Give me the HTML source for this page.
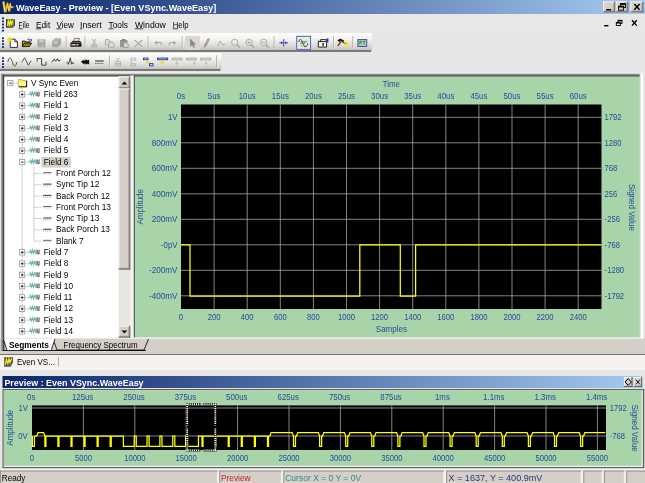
<!DOCTYPE html>
<html><head><meta charset="utf-8"><title>WaveEasy - Preview - [Even VSync.WaveEasy]</title>
<style>html,body{margin:0;padding:0;background:#d4d0c8;overflow:hidden}body{width:645px;height:483px;font-family:"Liberation Sans",sans-serif}svg text{white-space:pre}</style>
</head><body>
<svg width="645" height="483" viewBox="0 0 645 483" font-family="'Liberation Sans', sans-serif" style="display:block;filter:blur(0.3px)">
<defs>
<linearGradient id="gTitle" x1="0" x2="1" y1="0" y2="0"><stop offset="0" stop-color="#0a246a"/><stop offset="1" stop-color="#a6caf0"/></linearGradient>
<linearGradient id="gTb" x1="0" x2="0" y1="0" y2="1"><stop offset="0" stop-color="#fdfdfc"/><stop offset="0.35" stop-color="#f4f3f1"/><stop offset="0.75" stop-color="#dbd9d4"/><stop offset="1" stop-color="#c2c0ba"/></linearGradient>
<pattern id="chk" width="2" height="2" patternUnits="userSpaceOnUse"><rect width="2" height="2" fill="#e9e7e3"/></pattern>
</defs>
<rect x="0.00" y="0.00" width="645.00" height="483.00" fill="#e6e6e6"/>
<rect x="0.00" y="0.00" width="645.00" height="14.00" fill="url(#gTitle)"/>
<text transform="translate(16.00,10.80) scale(1.0334,1)" font-size="8.8" fill="#fff" text-anchor="start" font-weight="bold">WaveEasy - Preview - [Even VSync.WaveEasy]</text>
<path d="M2.2 1.4 L4.6 1.2 L5.6 7.6 L6.8 2.6 L8.2 2.6 L9 7 L9.8 2.8 L11 3 L11 5.6 L13.6 6.4 L13.4 8.2 L11 8 L10.2 11.6 L8.4 11.8 L7.6 7.6 L6.4 12.4 L4 12.4 Z" fill="#e6ae14"/>
<path d="M3.4 2 L5 11.4 M7.4 3.4 L8.8 10.8 M10.4 3.6 L10 8" stroke="#ffe27a" stroke-width="0.9" fill="none"/>
<rect x="603.20" y="1.50" width="12.00" height="10.80" fill="#d4d0c8"/>
<line x1="603.20" y1="1.90" x2="615.20" y2="1.90" stroke="#fff" stroke-width="0.8"/>
<line x1="603.60" y1="1.50" x2="603.60" y2="12.30" stroke="#fff" stroke-width="0.8"/>
<line x1="603.20" y1="11.90" x2="615.20" y2="11.90" stroke="#404040" stroke-width="0.8"/>
<line x1="614.80" y1="1.50" x2="614.80" y2="12.30" stroke="#404040" stroke-width="0.8"/>
<line x1="604.00" y1="11.10" x2="614.40" y2="11.10" stroke="#808080" stroke-width="0.8"/>
<line x1="614.00" y1="2.30" x2="614.00" y2="11.50" stroke="#808080" stroke-width="0.8"/>
<rect x="615.80" y="1.50" width="12.40" height="10.80" fill="#d4d0c8"/>
<line x1="615.80" y1="1.90" x2="628.20" y2="1.90" stroke="#fff" stroke-width="0.8"/>
<line x1="616.20" y1="1.50" x2="616.20" y2="12.30" stroke="#fff" stroke-width="0.8"/>
<line x1="615.80" y1="11.90" x2="628.20" y2="11.90" stroke="#404040" stroke-width="0.8"/>
<line x1="627.80" y1="1.50" x2="627.80" y2="12.30" stroke="#404040" stroke-width="0.8"/>
<line x1="616.60" y1="11.10" x2="627.40" y2="11.10" stroke="#808080" stroke-width="0.8"/>
<line x1="627.00" y1="2.30" x2="627.00" y2="11.50" stroke="#808080" stroke-width="0.8"/>
<rect x="630.50" y="1.50" width="12.80" height="10.80" fill="#d4d0c8"/>
<line x1="630.50" y1="1.90" x2="643.30" y2="1.90" stroke="#fff" stroke-width="0.8"/>
<line x1="630.90" y1="1.50" x2="630.90" y2="12.30" stroke="#fff" stroke-width="0.8"/>
<line x1="630.50" y1="11.90" x2="643.30" y2="11.90" stroke="#404040" stroke-width="0.8"/>
<line x1="642.90" y1="1.50" x2="642.90" y2="12.30" stroke="#404040" stroke-width="0.8"/>
<line x1="631.30" y1="11.10" x2="642.50" y2="11.10" stroke="#808080" stroke-width="0.8"/>
<line x1="642.10" y1="2.30" x2="642.10" y2="11.50" stroke="#808080" stroke-width="0.8"/>
<rect x="606.30" y="9.00" width="4.80" height="1.50" fill="#000"/>
<g fill="none" stroke="#000" stroke-width="0.9"><rect x="620.5" y="3.6" width="5" height="4"/><line x1="620.5" y1="4.2" x2="625.5" y2="4.2" stroke-width="1.4"/><rect x="618.6" y="6.2" width="5" height="4" fill="#d4d0c8"/><line x1="618.6" y1="6.8" x2="623.6" y2="6.8" stroke-width="1.4"/></g>
<path d="M634.3 4 L639.6 9.8 M639.6 4 L634.3 9.8" stroke="#000" stroke-width="1.5" fill="none"/>
<rect x="0.00" y="14.00" width="645.00" height="19.50" fill="#e7e7e6"/>
<rect x="2.10" y="17.40" width="1.80" height="1.80" fill="#001c7c"/>
<rect x="2.10" y="20.48" width="1.80" height="1.80" fill="#001c7c"/>
<rect x="2.10" y="23.56" width="1.80" height="1.80" fill="#001c7c"/>
<rect x="2.10" y="26.64" width="1.80" height="1.80" fill="#001c7c"/>
<rect x="2.10" y="29.72" width="1.80" height="1.80" fill="#001c7c"/>
<path d="M6 19.2 H14.9 V25.4 L12.6 27.8 H6 Z" fill="#3c3c34"/>
<path d="M7 20.2 H13.9 V25 L12.2 26.8 H7 Z" fill="#7c7c6c"/>
<path d="M7.6 25.6 L8.4 21.2 L9.6 24.6 L10.6 21 L11.6 24 L12.8 20.6" stroke="#f4f000" stroke-width="1.3" fill="none"/>
<text transform="translate(18.60,27.70) scale(0.7776,1)" font-size="8.7" fill="#000" text-anchor="start">File</text>
<line x1="18.60" y1="28.80" x2="22.73" y2="28.80" stroke="#000" stroke-width="0.7"/>
<text transform="translate(36.00,27.70) scale(0.9472,1)" font-size="8.7" fill="#000" text-anchor="start">Edit</text>
<line x1="36.00" y1="28.80" x2="41.50" y2="28.80" stroke="#000" stroke-width="0.7"/>
<text transform="translate(56.40,27.70) scale(0.9305,1)" font-size="8.7" fill="#000" text-anchor="start">View</text>
<line x1="56.40" y1="28.80" x2="61.80" y2="28.80" stroke="#000" stroke-width="0.7"/>
<text transform="translate(80.00,27.70) scale(0.9974,1)" font-size="8.7" fill="#000" text-anchor="start">Insert</text>
<line x1="80.00" y1="28.80" x2="82.41" y2="28.80" stroke="#000" stroke-width="0.7"/>
<text transform="translate(108.50,27.70) scale(0.9602,1)" font-size="8.7" fill="#000" text-anchor="start">Tools</text>
<line x1="108.50" y1="28.80" x2="113.60" y2="28.80" stroke="#000" stroke-width="0.7"/>
<text transform="translate(134.90,27.70) scale(1.0019,1)" font-size="8.7" fill="#000" text-anchor="start">Window</text>
<line x1="134.90" y1="28.80" x2="143.13" y2="28.80" stroke="#000" stroke-width="0.7"/>
<text transform="translate(172.70,27.70) scale(0.8831,1)" font-size="8.7" fill="#000" text-anchor="start">Help</text>
<line x1="172.70" y1="28.80" x2="178.25" y2="28.80" stroke="#000" stroke-width="0.7"/>
<rect x="604.20" y="25.00" width="4.20" height="1.40" fill="#000"/>
<g fill="none" stroke="#000" stroke-width="0.9"><rect x="618" y="20.3" width="4" height="3.2"/><line x1="618" y1="20.7" x2="622" y2="20.7" stroke-width="1.3"/><rect x="616.3" y="22.4" width="4" height="3.2" fill="#e7e7e6"/><line x1="616.3" y1="22.9" x2="620.3" y2="22.9" stroke-width="1.3"/></g>
<path d="M632 20.3 L636.8 25.6 M636.8 20.3 L632 25.6" stroke="#000" stroke-width="1.4" fill="none"/>
<path d="M0 33 H370.4 Q372.4 33 372.4 35 V48.4 Q372.4 50.4 370.4 50.4 H0 Z" fill="url(#gTb)"/>
<line x1="0.00" y1="50.95" x2="371.20" y2="50.95" stroke="#595753" stroke-width="1.5"/>
<rect x="2.10" y="37.30" width="1.80" height="1.80" fill="#001c7c"/>
<rect x="2.10" y="40.25" width="1.80" height="1.80" fill="#001c7c"/>
<rect x="2.10" y="43.20" width="1.80" height="1.80" fill="#001c7c"/>
<rect x="2.10" y="46.15" width="1.80" height="1.80" fill="#001c7c"/>
<path d="M0 53 H219.6 Q221.6 53 221.6 55 V67.5 Q221.6 69.5 219.6 69.5 H0 Z" fill="url(#gTb)"/>
<line x1="0.00" y1="70.05" x2="220.40" y2="70.05" stroke="#595753" stroke-width="1.5"/>
<rect x="2.10" y="57.30" width="1.80" height="1.80" fill="#001c7c"/>
<rect x="2.10" y="60.25" width="1.80" height="1.80" fill="#001c7c"/>
<rect x="2.10" y="63.20" width="1.80" height="1.80" fill="#001c7c"/>
<rect x="2.10" y="66.15" width="1.80" height="1.80" fill="#001c7c"/>
<g id="tb1">
<path d="M10.2 39.2 h4.6 l2.6 2.6 v5.6 h-7.2 z" fill="#fff" stroke="#000" stroke-width="0.8"/>
<path d="M14.8 39.2 v2.6 h2.6" fill="none" stroke="#000" stroke-width="0.7"/>
<path d="M9.8 36.8 v6 M6.9 39.8 h5.8 M7.8 37.8 l4 4 M11.8 37.8 l-4 4" stroke="#e8e000" stroke-width="1" fill="none"/>
<path d="M22.4 46.6 v-5.6 h2.6 l0.8 0.9 h3.6 v1.4" fill="#b0a820" stroke="#000" stroke-width="0.8"/>
<path d="M22.4 46.6 l2 -3.6 h7.2 l-2.2 3.6 z" fill="#8c8400" stroke="#000" stroke-width="0.8"/>
<path d="M27.2 39.6 q2 -1.6 3.6 0.2 l0.6 -0.8 v2.2 h-2.2 l0.8 -0.8" fill="none" stroke="#2838b0" stroke-width="0.8"/>
<path d="M37.4 39.2 h8 v8.2 h-7.2 l-0.8 -0.8 z" fill="#a6a6a2"/>
<rect x="39.20" y="39.20" width="4.60" height="3.20" fill="#cbc9c4"/>
<rect x="39.60" y="44.60" width="3.80" height="2.80" fill="#bdbbb6"/>
<rect x="40.20" y="45.00" width="1.20" height="2.00" fill="#a6a6a2"/>
<path d="M54.6 38.2 h6.4 v6.6 h-1.2 v1.3 h-1.2 v1.2 h-6.4 v-6.6 h1.2 v-1.3 h1.2 z" fill="#a6a6a2"/>
<path d="M53.6 41.6 h4 v1.8 h-4 z" fill="#d4d2cc"/>
<path d="M54.8 39.4 h5 M53.6 40.6 h5" stroke="#c4c2bc" stroke-width="0.5" fill="none"/>
<line x1="66.30" y1="36.20" x2="66.30" y2="48.00" stroke="#a6a49e" stroke-width="0.9"/>
<line x1="67.10" y1="36.70" x2="67.10" y2="48.50" stroke="#f8f8f6" stroke-width="0.6"/>
<path d="M73.4 41.2 L74.6 38.4 H79.4 L78.6 41.2 Z" fill="#ececec" stroke="#303030" stroke-width="0.6"/>
<path d="M70.4 43.6 L72.4 41 H80.4 L81.5 43.6 V46.8 H70.4 Z" fill="#1c1c1c"/>
<path d="M72.8 41.7 H80 L80.6 43 H72 Z" fill="#59606a"/>
<rect x="71.40" y="44.20" width="7.20" height="1.10" fill="#f0f0f0"/>
<rect x="75.60" y="44.10" width="1.40" height="1.30" fill="#e02020"/>
<line x1="85.00" y1="36.20" x2="85.00" y2="48.00" stroke="#a6a49e" stroke-width="0.9"/>
<line x1="85.80" y1="36.70" x2="85.80" y2="48.50" stroke="#f8f8f6" stroke-width="0.6"/>
<g fill="none" stroke="#a2a29e" stroke-width="0.85"><path d="M92.4 38.8 L95.2 44.8 M96 38.8 L93.2 44.8"/><ellipse cx="92.6" cy="46" rx="1" ry="1.4"/><ellipse cx="95.8" cy="46" rx="1" ry="1.4"/></g>
<g fill="#deddd8" stroke="#a6a6a2" stroke-width="0.9"><path d="M105.4 39.6 h3.4 l1.4 1.4 v4 h-4.8 z"/><path d="M108.8 42 h3.6 l1.6 1.6 v3.8 h-5.2 z"/></g>
<path d="M120 40 h7.4 v7.2 h-7.4 z" fill="#969692"/>
<rect x="122.00" y="39.00" width="3.40" height="1.80" fill="#82827e"/>
<path d="M123.6 42.6 h3.2 l1.4 1.4 v3.6 h-4.6 z" fill="#d8d6d0" stroke="#8a8a86" stroke-width="0.7"/>
<path d="M134.6 40 L142.2 46.8 M142.2 40 L134.6 46.8" stroke="#a6a6a2" stroke-width="1.1" fill="none"/>
<line x1="148.20" y1="36.20" x2="148.20" y2="48.00" stroke="#a6a49e" stroke-width="0.9"/>
<line x1="149.00" y1="36.70" x2="149.00" y2="48.50" stroke="#f8f8f6" stroke-width="0.6"/>
<path d="M156 42.6 H161.3 V45.6" fill="none" stroke="#a8a8a4" stroke-width="1"/>
<path d="M154 42.8 L157.2 40.8 V44.8 Z" fill="#a8a8a4"/>
<path d="M174.6 42.6 H169.3 V45.6" fill="none" stroke="#a8a8a4" stroke-width="1"/>
<path d="M176.6 42.8 L173.4 40.8 V44.8 Z" fill="#a8a8a4"/>
<line x1="182.20" y1="36.20" x2="182.20" y2="48.00" stroke="#a6a49e" stroke-width="0.9"/>
<line x1="183.00" y1="36.70" x2="183.00" y2="48.50" stroke="#f8f8f6" stroke-width="0.6"/>
<rect x="185.10" y="36.00" width="14.70" height="14.00" fill="#dad7cf"/>
<path d="M190.4 39 v7.4 l1.8 -1.6 l1.4 2.8 l1 -0.5 l-1.4 -2.7 h2.4 z" fill="#8a8a86" stroke="#7a7a76" stroke-width="0.4"/>
<path d="M208 38.6 l1.4 0.8 l-3.4 6.6 l-1.8 1.4 l0.3 -2.2 z" fill="#b8b6b0" stroke="#8a8a86" stroke-width="0.8"/>
<path d="M217.4 46.2 L220.2 41.2 L222.6 45 L225 44" fill="none" stroke="#a6a6a2" stroke-width="0.9"/>
<circle cx="234.7" cy="42.4" r="3.2" fill="none" stroke="#a6a6a2" stroke-width="0.9"/>
<path d="M236.89999999999998 44.8 l2.8 2.8" stroke="#a6a6a2" stroke-width="1.4" fill="none"/>
<circle cx="249.1" cy="42.4" r="3.2" fill="none" stroke="#a6a6a2" stroke-width="0.9"/>
<path d="M251.29999999999998 44.8 l2.8 2.8" stroke="#a6a6a2" stroke-width="1.4" fill="none"/>
<line x1="247.50" y1="42.40" x2="250.70" y2="42.40" stroke="#a6a6a2" stroke-width="0.9"/>
<line x1="249.10" y1="40.80" x2="249.10" y2="44.00" stroke="#a6a6a2" stroke-width="0.9"/>
<circle cx="263.7" cy="42.4" r="3.2" fill="none" stroke="#a6a6a2" stroke-width="0.9"/>
<path d="M265.9 44.8 l2.8 2.8" stroke="#a6a6a2" stroke-width="1.4" fill="none"/>
<line x1="262.10" y1="42.40" x2="265.30" y2="42.40" stroke="#a6a6a2" stroke-width="0.9"/>
<line x1="274.20" y1="36.20" x2="274.20" y2="48.00" stroke="#a6a49e" stroke-width="0.9"/>
<line x1="275.00" y1="36.70" x2="275.00" y2="48.50" stroke="#f8f8f6" stroke-width="0.6"/>
<path d="M283.7 39.2 v7.4 M279.4 42.8 h3 M285 42.8 h3" stroke="#2030c0" stroke-width="0.9" fill="none"/>
<path d="M283 42.8 l-1.8 -1.6 v3.2 z M284.4 42.8 l1.8 -1.6 v3.2 z" fill="#2030c0"/>
<rect x="296.7" y="36.4" width="13.8" height="13" fill="#e9e9e7" stroke="#5a72bc" stroke-width="1.1"/>
<path d="M300.4 43.2 h4.4 v-1.8 h-2.6 z" fill="none" stroke="#40a040" stroke-width="0.8"/>
<path d="M298.8 42 q1.2 -4.4 2.8 -1.4 q1.2 2.4 2.2 4.6 q1.4 3 2.6 1.2 q0.8 -1.2 1.4 -2.6" fill="none" stroke="#282828" stroke-width="0.9"/>
<path d="M300.6 44.4 q1.4 3.6 2.8 1 q0.8 -2 1.6 -3.6 q1.2 -2 2.2 0.6 q0.4 1.2 0.6 2.4" fill="none" stroke="#58a858" stroke-width="0.8"/>
<path d="M320.6 41.6 v-2 h5.6 v2" fill="#f4f4f4" stroke="#101010" stroke-width="0.9"/>
<path d="M318.3 41.6 h8.3 v5.5 h-8.3 z" fill="#f4f4f4" stroke="#101010" stroke-width="0.9"/>
<rect x="322.20" y="43.00" width="1.80" height="3.20" fill="#505050"/>
<rect x="326.60" y="38.40" width="1.80" height="4.00" fill="#2030c0"/>
<rect x="317.80" y="39.80" width="1.60" height="1.40" fill="#20c8c8"/>
<line x1="333.50" y1="36.20" x2="333.50" y2="48.00" stroke="#a6a49e" stroke-width="0.9"/>
<line x1="334.30" y1="36.70" x2="334.30" y2="48.50" stroke="#f8f8f6" stroke-width="0.6"/>
<path d="M337.4 40.4 l2.6 -2 l4.2 2.2 l-1.2 1.4 l-2.4 -1.2 l-1.4 1.2 z" fill="#181818"/>
<path d="M341.4 41.2 l-3.6 4.6" stroke="#8a3820" stroke-width="1.4" fill="none"/>
<path d="M342.6 41.8 l3 2" stroke="#181818" stroke-width="1.1"/>
<path d="M344.6 43.6 q0 -1.5 1.5 -1.5 q1.5 0 1.5 1.3 q0 0.9 -1.5 1.5 v0.8 M346.1 46.6 v1.2" fill="none" stroke="#f4ec00" stroke-width="1.5"/>
<line x1="352.80" y1="36.20" x2="352.80" y2="48.00" stroke="#a6a49e" stroke-width="0.9"/>
<line x1="353.60" y1="36.70" x2="353.60" y2="48.50" stroke="#f8f8f6" stroke-width="0.6"/>
<rect x="357.9" y="39.6" width="8.8" height="6.8" fill="#bccabc" stroke="#4848b8" stroke-width="1"/>
<path d="M359.8 44.6 v-3.2 h1.6 v1.6 h-1.6 M362.8 41.4 h2.6 M364.1 41.4 v3.2" stroke="#18a018" stroke-width="0.9" fill="none"/>
</g>
<g id="tb2">
<path d="M7.8 62 q2 -8.6 4.6 0 q2.4 8.6 4.6 0" fill="none" stroke="#383838" stroke-width="0.8"/>
<path d="M21.8 62.4 L24.6 57.6 L28.4 65.4 L31 60.8" fill="none" stroke="#383838" stroke-width="0.8"/>
<path d="M37.1 61.6 V58.5 H41.6 V65.2 H46 V61.6" fill="none" stroke="#383838" stroke-width="0.9"/>
<path d="M51.7 62.3 L54.3 59 L55.5 61.2 L57.5 58.6 L58.5 61 L60.5 60" fill="none" stroke="#383838" stroke-width="1"/>
<path d="M66.3 63 L67.5 62.2 L68.6 64.4 L70.3 57.8 L71.6 64.2 L72.5 62.4 L73.3 63.8 L74.2 63" fill="none" stroke="#383838" stroke-width="0.9"/>
<path d="M80.7 61.8 L82.6 60.8 L83.4 59.6 L84.2 61 L85 59.3 L85.9 60.6 L86.7 59.3 L87.6 60.4 L88.4 59.5 L89.2 60.4 V63.6 L88.4 64.5 L87.6 63.6 L86.7 64.8 L85.9 63.4 L85 64.8 L84.2 63 L83.4 64.4 L82.6 63 Z" fill="#101010"/>
<line x1="95.10" y1="61.00" x2="103.80" y2="61.00" stroke="#383838" stroke-width="1.1"/>
<line x1="95.10" y1="63.40" x2="103.80" y2="63.40" stroke="#484848" stroke-width="0.9" stroke-dasharray="1.3 0.8"/>
<line x1="109.50" y1="55.40" x2="109.50" y2="67.00" stroke="#a6a49e" stroke-width="0.9"/>
<line x1="110.30" y1="55.90" x2="110.30" y2="67.50" stroke="#f8f8f6" stroke-width="0.6"/>
<g fill="none" stroke="#aeaeaa" stroke-width="0.8"><path d="M116 58 l2 1.6 l2 -1.6 M118 59.6 v1.4"/><rect x="115.6" y="61.4" width="5" height="2"/><rect x="115.6" y="64" width="5" height="1.8"/></g>
<g fill="none" stroke="#aeaeaa" stroke-width="0.8"><rect x="130.8" y="58" width="5" height="2"/><path d="M131.6 60.4 q-1.6 1.6 0 3.2"/><rect x="130.8" y="63.8" width="5" height="2"/></g>
<rect x="143.00" y="57.60" width="5.50" height="2.60" fill="#2838b8"/>
<rect x="144.20" y="58.40" width="3.00" height="1.00" fill="#c8d0f0"/>
<path d="M146.6 61 l4 3.6 M146.6 61 v2.6 M146.6 61 h2.6" stroke="#e8e020" stroke-width="1.2" fill="none"/>
<rect x="149.4" y="63.6" width="3.6" height="2.2" fill="none" stroke="#2838b8" stroke-width="0.9"/>
<rect x="157.00" y="57.60" width="11.20" height="2.60" fill="#2838b8"/>
<rect x="158.40" y="58.40" width="8.40" height="1.00" fill="#a8b4ea"/>
<path d="M161.4 61 l3.6 4 M161.4 61 v2.8 M161.4 61 h2.8" stroke="#e8e020" stroke-width="1.2" fill="none"/>
<rect x="171.8" y="58" width="10.3" height="2" fill="#d6d4cf" stroke="#a4a4a0" stroke-width="0.7"/>
<path d="M176.8 61 v4.6 M175.60000000000002 64 l1.2 -1.6 l1.2 1.6" fill="none" stroke="#b2b2ae" stroke-width="0.7"/>
<rect x="186.2" y="58" width="10.3" height="2" fill="#d6d4cf" stroke="#a4a4a0" stroke-width="0.7"/>
<path d="M194.4 61 v4.6 M193.20000000000002 64 l1.2 -1.6 l1.2 1.6" fill="none" stroke="#b2b2ae" stroke-width="0.7"/>
<rect x="200.6" y="58" width="10.3" height="2" fill="#d6d4cf" stroke="#a4a4a0" stroke-width="0.7"/>
<path d="M206 61 v4.6 M204.8 64 l1.2 -1.6 l1.2 1.6" fill="none" stroke="#b2b2ae" stroke-width="0.7"/>
<line x1="216.50" y1="55.40" x2="216.50" y2="67.00" stroke="#a6a49e" stroke-width="0.9"/>
<line x1="217.30" y1="55.90" x2="217.30" y2="67.50" stroke="#f8f8f6" stroke-width="0.6"/>
</g>
<rect x="0.00" y="72.00" width="645.00" height="1.40" fill="#ececeb"/>
<rect x="1.30" y="73.80" width="641.70" height="265.00" fill="#fff"/>
<rect x="1.30" y="73.80" width="639.40" height="263.50" fill="#d9d6cf"/>
<rect x="1.30" y="73.80" width="638.30" height="1.50" fill="#8c8c8a"/>
<rect x="2.20" y="75.20" width="637.40" height="1.50" fill="#484848"/>
<rect x="1.30" y="73.80" width="1.60" height="277.40" fill="#808080"/>
<rect x="2.90" y="75.00" width="1.50" height="275.50" fill="#404040"/>
<rect x="4.40" y="76.70" width="126.00" height="260.80" fill="#fff"/>
<rect x="130.40" y="75.40" width="3.40" height="263.00" fill="#f4f3f1"/>
<rect x="133.80" y="75.40" width="1.10" height="262.00" fill="#454545"/>
<rect x="134.90" y="76.70" width="504.70" height="260.60" fill="#a9d3a9"/>
<g id="tree">
<line x1="22.20" y1="88.20" x2="22.20" y2="331.36" stroke="#909090" stroke-width="0.8" stroke-dasharray="0.8 0.8"/>
<line x1="34.00" y1="167.16" x2="34.00" y2="241.12" stroke="#909090" stroke-width="0.8" stroke-dasharray="0.8 0.8"/>
<line x1="13.00" y1="83.20" x2="17.00" y2="83.20" stroke="#909090" stroke-width="0.8" stroke-dasharray="0.8 0.8"/>
<rect x="7.60" y="80.50" width="5.20" height="5.20" fill="#fff" stroke="#989898" stroke-width="0.8"/>
<line x1="9.20" y1="83.20" x2="11.80" y2="83.20" stroke="#000" stroke-width="0.8"/>
<path d="M18.2 79.60000000000001 h3.4 l0.8 0.9 h4 v6.6 h-8.2 z" fill="#f6ee58" stroke="#8a8420" stroke-width="0.5"/>
<path d="M18.4 86.2 l1.4 -4 h6.8 v4.2 z" fill="#fffa9c"/>
<path d="M26.6 80.8 v6 h-7.6" fill="none" stroke="#202010" stroke-width="1.1"/>
<text transform="translate(31.00,85.80) scale(0.9954,1)" font-size="8.3" fill="#000" text-anchor="start">V Sync Even</text>
<line x1="25.00" y1="94.48" x2="29.00" y2="94.48" stroke="#909090" stroke-width="0.8" stroke-dasharray="0.8 0.8"/>
<rect x="19.40" y="91.68" width="5.30" height="5.40" fill="#fff" stroke="#989898" stroke-width="0.8"/>
<line x1="20.90" y1="94.48" x2="23.50" y2="94.48" stroke="#000" stroke-width="0.8"/>
<line x1="22.20" y1="93.18" x2="22.20" y2="95.78" stroke="#000" stroke-width="0.8"/>
<path d="M29.6 95.08 l0.9 -2.6 l1 2.8 l1 -3.2 l1 3.4 l0.9 -2.8 l0.6 1.8" fill="none" stroke="#62bab2" stroke-width="1.1"/>
<path d="M36.1 96.28 v-4.6 M37.7 91.88000000000001 v4.2 h1.4 v-4.4" fill="none" stroke="#383838" stroke-width="0.8"/>
<text transform="translate(43.70,97.08) scale(0.9950,1)" font-size="8.3" fill="#000" text-anchor="start">Field 263</text>
<line x1="25.00" y1="105.76" x2="29.00" y2="105.76" stroke="#909090" stroke-width="0.8" stroke-dasharray="0.8 0.8"/>
<rect x="19.40" y="102.96" width="5.30" height="5.40" fill="#fff" stroke="#989898" stroke-width="0.8"/>
<line x1="20.90" y1="105.76" x2="23.50" y2="105.76" stroke="#000" stroke-width="0.8"/>
<line x1="22.20" y1="104.46" x2="22.20" y2="107.06" stroke="#000" stroke-width="0.8"/>
<path d="M29.6 106.36 l0.9 -2.6 l1 2.8 l1 -3.2 l1 3.4 l0.9 -2.8 l0.6 1.8" fill="none" stroke="#62bab2" stroke-width="1.1"/>
<path d="M36.1 107.56 v-4.6 M37.7 103.16000000000001 v4.2 h1.4 v-4.4" fill="none" stroke="#383838" stroke-width="0.8"/>
<text transform="translate(43.70,108.36) scale(0.9950,1)" font-size="8.3" fill="#000" text-anchor="start">Field 1</text>
<line x1="25.00" y1="117.04" x2="29.00" y2="117.04" stroke="#909090" stroke-width="0.8" stroke-dasharray="0.8 0.8"/>
<rect x="19.40" y="114.24" width="5.30" height="5.40" fill="#fff" stroke="#989898" stroke-width="0.8"/>
<line x1="20.90" y1="117.04" x2="23.50" y2="117.04" stroke="#000" stroke-width="0.8"/>
<line x1="22.20" y1="115.74" x2="22.20" y2="118.34" stroke="#000" stroke-width="0.8"/>
<path d="M29.6 117.63999999999999 l0.9 -2.6 l1 2.8 l1 -3.2 l1 3.4 l0.9 -2.8 l0.6 1.8" fill="none" stroke="#62bab2" stroke-width="1.1"/>
<path d="M36.1 118.83999999999999 v-4.6 M37.7 114.44 v4.2 h1.4 v-4.4" fill="none" stroke="#383838" stroke-width="0.8"/>
<text transform="translate(43.70,119.64) scale(0.9950,1)" font-size="8.3" fill="#000" text-anchor="start">Field 2</text>
<line x1="25.00" y1="128.32" x2="29.00" y2="128.32" stroke="#909090" stroke-width="0.8" stroke-dasharray="0.8 0.8"/>
<rect x="19.40" y="125.52" width="5.30" height="5.40" fill="#fff" stroke="#989898" stroke-width="0.8"/>
<line x1="20.90" y1="128.32" x2="23.50" y2="128.32" stroke="#000" stroke-width="0.8"/>
<line x1="22.20" y1="127.02" x2="22.20" y2="129.62" stroke="#000" stroke-width="0.8"/>
<path d="M29.6 128.92 l0.9 -2.6 l1 2.8 l1 -3.2 l1 3.4 l0.9 -2.8 l0.6 1.8" fill="none" stroke="#62bab2" stroke-width="1.1"/>
<path d="M36.1 130.12 v-4.6 M37.7 125.72 v4.2 h1.4 v-4.4" fill="none" stroke="#383838" stroke-width="0.8"/>
<text transform="translate(43.70,130.92) scale(0.9950,1)" font-size="8.3" fill="#000" text-anchor="start">Field 3</text>
<line x1="25.00" y1="139.60" x2="29.00" y2="139.60" stroke="#909090" stroke-width="0.8" stroke-dasharray="0.8 0.8"/>
<rect x="19.40" y="136.80" width="5.30" height="5.40" fill="#fff" stroke="#989898" stroke-width="0.8"/>
<line x1="20.90" y1="139.60" x2="23.50" y2="139.60" stroke="#000" stroke-width="0.8"/>
<line x1="22.20" y1="138.30" x2="22.20" y2="140.90" stroke="#000" stroke-width="0.8"/>
<path d="M29.6 140.2 l0.9 -2.6 l1 2.8 l1 -3.2 l1 3.4 l0.9 -2.8 l0.6 1.8" fill="none" stroke="#62bab2" stroke-width="1.1"/>
<path d="M36.1 141.4 v-4.6 M37.7 137.0 v4.2 h1.4 v-4.4" fill="none" stroke="#383838" stroke-width="0.8"/>
<text transform="translate(43.70,142.20) scale(0.9950,1)" font-size="8.3" fill="#000" text-anchor="start">Field 4</text>
<line x1="25.00" y1="150.88" x2="29.00" y2="150.88" stroke="#909090" stroke-width="0.8" stroke-dasharray="0.8 0.8"/>
<rect x="19.40" y="148.08" width="5.30" height="5.40" fill="#fff" stroke="#989898" stroke-width="0.8"/>
<line x1="20.90" y1="150.88" x2="23.50" y2="150.88" stroke="#000" stroke-width="0.8"/>
<line x1="22.20" y1="149.58" x2="22.20" y2="152.18" stroke="#000" stroke-width="0.8"/>
<path d="M29.6 151.48 l0.9 -2.6 l1 2.8 l1 -3.2 l1 3.4 l0.9 -2.8 l0.6 1.8" fill="none" stroke="#62bab2" stroke-width="1.1"/>
<path d="M36.1 152.68 v-4.6 M37.7 148.28 v4.2 h1.4 v-4.4" fill="none" stroke="#383838" stroke-width="0.8"/>
<text transform="translate(43.70,153.48) scale(0.9950,1)" font-size="8.3" fill="#000" text-anchor="start">Field 5</text>
<line x1="25.00" y1="162.16" x2="29.00" y2="162.16" stroke="#909090" stroke-width="0.8" stroke-dasharray="0.8 0.8"/>
<rect x="19.40" y="159.36" width="5.30" height="5.40" fill="#fff" stroke="#989898" stroke-width="0.8"/>
<line x1="20.90" y1="162.16" x2="23.50" y2="162.16" stroke="#000" stroke-width="0.8"/>
<path d="M29.6 162.76 l0.9 -2.6 l1 2.8 l1 -3.2 l1 3.4 l0.9 -2.8 l0.6 1.8" fill="none" stroke="#62bab2" stroke-width="1.1"/>
<path d="M36.1 163.96 v-4.6 M37.7 159.56 v4.2 h1.4 v-4.4" fill="none" stroke="#383838" stroke-width="0.8"/>
<rect x="41.50" y="156.96" width="29.29" height="10.60" fill="#d4d0c8"/>
<text transform="translate(43.70,164.76) scale(0.9950,1)" font-size="8.3" fill="#000" text-anchor="start">Field 6</text>
<line x1="34.00" y1="173.44" x2="42.00" y2="173.44" stroke="#909090" stroke-width="0.8" stroke-dasharray="0.8 0.8"/>
<line x1="43.20" y1="172.64" x2="51.50" y2="172.64" stroke="#505050" stroke-width="0.9"/>
<line x1="43.20" y1="174.04" x2="51.50" y2="174.04" stroke="#909090" stroke-width="0.8" stroke-dasharray="1 1.2"/>
<text transform="translate(56.00,176.04)" font-size="8.3" fill="#000" text-anchor="start">Front Porch 12</text>
<line x1="34.00" y1="184.72" x2="42.00" y2="184.72" stroke="#909090" stroke-width="0.8" stroke-dasharray="0.8 0.8"/>
<line x1="43.20" y1="184.12" x2="51.50" y2="184.12" stroke="#202020" stroke-width="0.9"/>
<line x1="43.20" y1="185.92" x2="51.50" y2="185.92" stroke="#808080" stroke-width="0.8" stroke-dasharray="1 1"/>
<text transform="translate(56.00,187.32)" font-size="8.3" fill="#000" text-anchor="start">Sync Tip 12</text>
<line x1="34.00" y1="196.00" x2="42.00" y2="196.00" stroke="#909090" stroke-width="0.8" stroke-dasharray="0.8 0.8"/>
<line x1="43.20" y1="195.40" x2="51.50" y2="195.40" stroke="#202020" stroke-width="0.9"/>
<line x1="43.20" y1="197.20" x2="51.50" y2="197.20" stroke="#808080" stroke-width="0.8" stroke-dasharray="1 1"/>
<text transform="translate(56.00,198.60)" font-size="8.3" fill="#000" text-anchor="start">Back Porch 12</text>
<line x1="34.00" y1="207.28" x2="42.00" y2="207.28" stroke="#909090" stroke-width="0.8" stroke-dasharray="0.8 0.8"/>
<line x1="43.20" y1="206.48" x2="51.50" y2="206.48" stroke="#505050" stroke-width="0.9"/>
<line x1="43.20" y1="207.88" x2="51.50" y2="207.88" stroke="#909090" stroke-width="0.8" stroke-dasharray="1 1.2"/>
<text transform="translate(56.00,209.88)" font-size="8.3" fill="#000" text-anchor="start">Front Porch 13</text>
<line x1="34.00" y1="218.56" x2="42.00" y2="218.56" stroke="#909090" stroke-width="0.8" stroke-dasharray="0.8 0.8"/>
<line x1="43.20" y1="217.96" x2="51.50" y2="217.96" stroke="#202020" stroke-width="0.9"/>
<line x1="43.20" y1="219.76" x2="51.50" y2="219.76" stroke="#808080" stroke-width="0.8" stroke-dasharray="1 1"/>
<text transform="translate(56.00,221.16)" font-size="8.3" fill="#000" text-anchor="start">Sync Tip 13</text>
<line x1="34.00" y1="229.84" x2="42.00" y2="229.84" stroke="#909090" stroke-width="0.8" stroke-dasharray="0.8 0.8"/>
<line x1="43.20" y1="229.24" x2="51.50" y2="229.24" stroke="#202020" stroke-width="0.9"/>
<line x1="43.20" y1="231.04" x2="51.50" y2="231.04" stroke="#808080" stroke-width="0.8" stroke-dasharray="1 1"/>
<text transform="translate(56.00,232.44)" font-size="8.3" fill="#000" text-anchor="start">Back Porch 13</text>
<line x1="34.00" y1="241.12" x2="42.00" y2="241.12" stroke="#909090" stroke-width="0.8" stroke-dasharray="0.8 0.8"/>
<line x1="43.20" y1="240.32" x2="51.50" y2="240.32" stroke="#505050" stroke-width="0.9"/>
<line x1="43.20" y1="241.72" x2="51.50" y2="241.72" stroke="#909090" stroke-width="0.8" stroke-dasharray="1 1.2"/>
<text transform="translate(56.00,243.72)" font-size="8.3" fill="#000" text-anchor="start">Blank 7</text>
<line x1="25.00" y1="252.40" x2="29.00" y2="252.40" stroke="#909090" stroke-width="0.8" stroke-dasharray="0.8 0.8"/>
<rect x="19.40" y="249.60" width="5.30" height="5.40" fill="#fff" stroke="#989898" stroke-width="0.8"/>
<line x1="20.90" y1="252.40" x2="23.50" y2="252.40" stroke="#000" stroke-width="0.8"/>
<line x1="22.20" y1="251.10" x2="22.20" y2="253.70" stroke="#000" stroke-width="0.8"/>
<path d="M29.6 252.99999999999997 l0.9 -2.6 l1 2.8 l1 -3.2 l1 3.4 l0.9 -2.8 l0.6 1.8" fill="none" stroke="#62bab2" stroke-width="1.1"/>
<path d="M36.1 254.2 v-4.6 M37.7 249.79999999999998 v4.2 h1.4 v-4.4" fill="none" stroke="#383838" stroke-width="0.8"/>
<text transform="translate(43.70,255.00) scale(0.9950,1)" font-size="8.3" fill="#000" text-anchor="start">Field 7</text>
<line x1="25.00" y1="263.68" x2="29.00" y2="263.68" stroke="#909090" stroke-width="0.8" stroke-dasharray="0.8 0.8"/>
<rect x="19.40" y="260.88" width="5.30" height="5.40" fill="#fff" stroke="#989898" stroke-width="0.8"/>
<line x1="20.90" y1="263.68" x2="23.50" y2="263.68" stroke="#000" stroke-width="0.8"/>
<line x1="22.20" y1="262.38" x2="22.20" y2="264.98" stroke="#000" stroke-width="0.8"/>
<path d="M29.6 264.28000000000003 l0.9 -2.6 l1 2.8 l1 -3.2 l1 3.4 l0.9 -2.8 l0.6 1.8" fill="none" stroke="#62bab2" stroke-width="1.1"/>
<path d="M36.1 265.48 v-4.6 M37.7 261.08 v4.2 h1.4 v-4.4" fill="none" stroke="#383838" stroke-width="0.8"/>
<text transform="translate(43.70,266.28) scale(0.9950,1)" font-size="8.3" fill="#000" text-anchor="start">Field 8</text>
<line x1="25.00" y1="274.96" x2="29.00" y2="274.96" stroke="#909090" stroke-width="0.8" stroke-dasharray="0.8 0.8"/>
<rect x="19.40" y="272.16" width="5.30" height="5.40" fill="#fff" stroke="#989898" stroke-width="0.8"/>
<line x1="20.90" y1="274.96" x2="23.50" y2="274.96" stroke="#000" stroke-width="0.8"/>
<line x1="22.20" y1="273.66" x2="22.20" y2="276.26" stroke="#000" stroke-width="0.8"/>
<path d="M29.6 275.56 l0.9 -2.6 l1 2.8 l1 -3.2 l1 3.4 l0.9 -2.8 l0.6 1.8" fill="none" stroke="#62bab2" stroke-width="1.1"/>
<path d="M36.1 276.76 v-4.6 M37.7 272.35999999999996 v4.2 h1.4 v-4.4" fill="none" stroke="#383838" stroke-width="0.8"/>
<text transform="translate(43.70,277.56) scale(0.9950,1)" font-size="8.3" fill="#000" text-anchor="start">Field 9</text>
<line x1="25.00" y1="286.24" x2="29.00" y2="286.24" stroke="#909090" stroke-width="0.8" stroke-dasharray="0.8 0.8"/>
<rect x="19.40" y="283.44" width="5.30" height="5.40" fill="#fff" stroke="#989898" stroke-width="0.8"/>
<line x1="20.90" y1="286.24" x2="23.50" y2="286.24" stroke="#000" stroke-width="0.8"/>
<line x1="22.20" y1="284.94" x2="22.20" y2="287.54" stroke="#000" stroke-width="0.8"/>
<path d="M29.6 286.84000000000003 l0.9 -2.6 l1 2.8 l1 -3.2 l1 3.4 l0.9 -2.8 l0.6 1.8" fill="none" stroke="#62bab2" stroke-width="1.1"/>
<path d="M36.1 288.04 v-4.6 M37.7 283.64 v4.2 h1.4 v-4.4" fill="none" stroke="#383838" stroke-width="0.8"/>
<text transform="translate(43.70,288.84) scale(0.9950,1)" font-size="8.3" fill="#000" text-anchor="start">Field 10</text>
<line x1="25.00" y1="297.52" x2="29.00" y2="297.52" stroke="#909090" stroke-width="0.8" stroke-dasharray="0.8 0.8"/>
<rect x="19.40" y="294.72" width="5.30" height="5.40" fill="#fff" stroke="#989898" stroke-width="0.8"/>
<line x1="20.90" y1="297.52" x2="23.50" y2="297.52" stroke="#000" stroke-width="0.8"/>
<line x1="22.20" y1="296.22" x2="22.20" y2="298.82" stroke="#000" stroke-width="0.8"/>
<path d="M29.6 298.12 l0.9 -2.6 l1 2.8 l1 -3.2 l1 3.4 l0.9 -2.8 l0.6 1.8" fill="none" stroke="#62bab2" stroke-width="1.1"/>
<path d="M36.1 299.32 v-4.6 M37.7 294.91999999999996 v4.2 h1.4 v-4.4" fill="none" stroke="#383838" stroke-width="0.8"/>
<text transform="translate(43.70,300.12) scale(0.9950,1)" font-size="8.3" fill="#000" text-anchor="start">Field 11</text>
<line x1="25.00" y1="308.80" x2="29.00" y2="308.80" stroke="#909090" stroke-width="0.8" stroke-dasharray="0.8 0.8"/>
<rect x="19.40" y="306.00" width="5.30" height="5.40" fill="#fff" stroke="#989898" stroke-width="0.8"/>
<line x1="20.90" y1="308.80" x2="23.50" y2="308.80" stroke="#000" stroke-width="0.8"/>
<line x1="22.20" y1="307.50" x2="22.20" y2="310.10" stroke="#000" stroke-width="0.8"/>
<path d="M29.6 309.40000000000003 l0.9 -2.6 l1 2.8 l1 -3.2 l1 3.4 l0.9 -2.8 l0.6 1.8" fill="none" stroke="#62bab2" stroke-width="1.1"/>
<path d="M36.1 310.6 v-4.6 M37.7 306.2 v4.2 h1.4 v-4.4" fill="none" stroke="#383838" stroke-width="0.8"/>
<text transform="translate(43.70,311.40) scale(0.9950,1)" font-size="8.3" fill="#000" text-anchor="start">Field 12</text>
<line x1="25.00" y1="320.08" x2="29.00" y2="320.08" stroke="#909090" stroke-width="0.8" stroke-dasharray="0.8 0.8"/>
<rect x="19.40" y="317.28" width="5.30" height="5.40" fill="#fff" stroke="#989898" stroke-width="0.8"/>
<line x1="20.90" y1="320.08" x2="23.50" y2="320.08" stroke="#000" stroke-width="0.8"/>
<line x1="22.20" y1="318.78" x2="22.20" y2="321.38" stroke="#000" stroke-width="0.8"/>
<path d="M29.6 320.68 l0.9 -2.6 l1 2.8 l1 -3.2 l1 3.4 l0.9 -2.8 l0.6 1.8" fill="none" stroke="#62bab2" stroke-width="1.1"/>
<path d="M36.1 321.88 v-4.6 M37.7 317.47999999999996 v4.2 h1.4 v-4.4" fill="none" stroke="#383838" stroke-width="0.8"/>
<text transform="translate(43.70,322.68) scale(0.9950,1)" font-size="8.3" fill="#000" text-anchor="start">Field 13</text>
<line x1="25.00" y1="331.36" x2="29.00" y2="331.36" stroke="#909090" stroke-width="0.8" stroke-dasharray="0.8 0.8"/>
<rect x="19.40" y="328.56" width="5.30" height="5.40" fill="#fff" stroke="#989898" stroke-width="0.8"/>
<line x1="20.90" y1="331.36" x2="23.50" y2="331.36" stroke="#000" stroke-width="0.8"/>
<line x1="22.20" y1="330.06" x2="22.20" y2="332.66" stroke="#000" stroke-width="0.8"/>
<path d="M29.6 331.96000000000004 l0.9 -2.6 l1 2.8 l1 -3.2 l1 3.4 l0.9 -2.8 l0.6 1.8" fill="none" stroke="#62bab2" stroke-width="1.1"/>
<path d="M36.1 333.16 v-4.6 M37.7 328.76 v4.2 h1.4 v-4.4" fill="none" stroke="#383838" stroke-width="0.8"/>
<text transform="translate(43.70,333.96) scale(0.9950,1)" font-size="8.3" fill="#000" text-anchor="start">Field 14</text>
<rect x="118.60" y="76.50" width="11.60" height="261.00" fill="#e8e6e2"/>
<rect x="118.60" y="76.50" width="11.60" height="12.00" fill="#d4d0c8"/>
<line x1="118.60" y1="76.90" x2="130.20" y2="76.90" stroke="#fff" stroke-width="0.8"/>
<line x1="119.00" y1="76.50" x2="119.00" y2="88.50" stroke="#fff" stroke-width="0.8"/>
<line x1="118.60" y1="88.10" x2="130.20" y2="88.10" stroke="#404040" stroke-width="0.8"/>
<line x1="129.80" y1="76.50" x2="129.80" y2="88.50" stroke="#404040" stroke-width="0.8"/>
<line x1="119.40" y1="87.30" x2="129.40" y2="87.30" stroke="#808080" stroke-width="0.8"/>
<line x1="129.00" y1="77.30" x2="129.00" y2="87.70" stroke="#808080" stroke-width="0.8"/>
<path d="M121.5 84.4 h5.8 l-2.9 -3 z" fill="#000"/>
<rect x="118.60" y="325.80" width="11.60" height="11.70" fill="#d4d0c8"/>
<line x1="118.60" y1="326.20" x2="130.20" y2="326.20" stroke="#fff" stroke-width="0.8"/>
<line x1="119.00" y1="325.80" x2="119.00" y2="337.50" stroke="#fff" stroke-width="0.8"/>
<line x1="118.60" y1="337.10" x2="130.20" y2="337.10" stroke="#404040" stroke-width="0.8"/>
<line x1="129.80" y1="325.80" x2="129.80" y2="337.50" stroke="#404040" stroke-width="0.8"/>
<line x1="119.40" y1="336.30" x2="129.40" y2="336.30" stroke="#808080" stroke-width="0.8"/>
<line x1="129.00" y1="326.60" x2="129.00" y2="336.70" stroke="#808080" stroke-width="0.8"/>
<path d="M121.5 330.4 h5.8 l-2.9 3 z" fill="#000"/>
<rect x="118.60" y="88.50" width="11.60" height="181.00" fill="#d4d0c8"/>
<line x1="118.60" y1="88.90" x2="130.20" y2="88.90" stroke="#fff" stroke-width="0.8"/>
<line x1="119.00" y1="88.50" x2="119.00" y2="269.50" stroke="#fff" stroke-width="0.8"/>
<line x1="118.60" y1="269.10" x2="130.20" y2="269.10" stroke="#404040" stroke-width="0.8"/>
<line x1="129.80" y1="88.50" x2="129.80" y2="269.50" stroke="#404040" stroke-width="0.8"/>
<line x1="119.40" y1="268.30" x2="129.40" y2="268.30" stroke="#808080" stroke-width="0.8"/>
<line x1="129.00" y1="89.30" x2="129.00" y2="268.70" stroke="#808080" stroke-width="0.8"/>
</g>
<g id="plot">
<rect x="181.00" y="104.50" width="420.50" height="204.50" fill="#000"/>
<line x1="214.10" y1="104.50" x2="214.10" y2="309.00" stroke="#a6a6a6" stroke-width="0.8"/>
<line x1="247.20" y1="104.50" x2="247.20" y2="309.00" stroke="#a6a6a6" stroke-width="0.8"/>
<line x1="280.30" y1="104.50" x2="280.30" y2="309.00" stroke="#a6a6a6" stroke-width="0.8"/>
<line x1="313.40" y1="104.50" x2="313.40" y2="309.00" stroke="#a6a6a6" stroke-width="0.8"/>
<line x1="346.50" y1="104.50" x2="346.50" y2="309.00" stroke="#a6a6a6" stroke-width="0.8"/>
<line x1="379.60" y1="104.50" x2="379.60" y2="309.00" stroke="#a6a6a6" stroke-width="0.8"/>
<line x1="412.70" y1="104.50" x2="412.70" y2="309.00" stroke="#a6a6a6" stroke-width="0.8"/>
<line x1="445.80" y1="104.50" x2="445.80" y2="309.00" stroke="#a6a6a6" stroke-width="0.8"/>
<line x1="478.90" y1="104.50" x2="478.90" y2="309.00" stroke="#a6a6a6" stroke-width="0.8"/>
<line x1="512.00" y1="104.50" x2="512.00" y2="309.00" stroke="#a6a6a6" stroke-width="0.8"/>
<line x1="545.10" y1="104.50" x2="545.10" y2="309.00" stroke="#a6a6a6" stroke-width="0.8"/>
<line x1="578.20" y1="104.50" x2="578.20" y2="309.00" stroke="#a6a6a6" stroke-width="0.8"/>
<line x1="181.00" y1="117.30" x2="601.50" y2="117.30" stroke="#a6a6a6" stroke-width="0.8"/>
<line x1="181.00" y1="142.80" x2="601.50" y2="142.80" stroke="#a6a6a6" stroke-width="0.8"/>
<line x1="181.00" y1="168.30" x2="601.50" y2="168.30" stroke="#a6a6a6" stroke-width="0.8"/>
<line x1="181.00" y1="193.80" x2="601.50" y2="193.80" stroke="#a6a6a6" stroke-width="0.8"/>
<line x1="181.00" y1="219.30" x2="601.50" y2="219.30" stroke="#a6a6a6" stroke-width="0.8"/>
<line x1="181.00" y1="244.80" x2="601.50" y2="244.80" stroke="#a6a6a6" stroke-width="0.8"/>
<line x1="181.00" y1="270.30" x2="601.50" y2="270.30" stroke="#a6a6a6" stroke-width="0.8"/>
<line x1="181.00" y1="295.80" x2="601.50" y2="295.80" stroke="#a6a6a6" stroke-width="0.8"/>
<path d="M181.0 244.8 H190 V296.0 H359.8 V244.8 H400.3 V296.0 H415.6 V244.8 H601.5" fill="none" stroke="#ffff00" stroke-width="1.25"/>
<text transform="translate(181.00,99.20) scale(0.9350,1)" font-size="8.4" fill="#214f9c" text-anchor="middle">0s</text>
<text transform="translate(214.10,99.20) scale(0.9350,1)" font-size="8.4" fill="#214f9c" text-anchor="middle">5us</text>
<text transform="translate(247.20,99.20) scale(0.9350,1)" font-size="8.4" fill="#214f9c" text-anchor="middle">10us</text>
<text transform="translate(280.30,99.20) scale(0.9350,1)" font-size="8.4" fill="#214f9c" text-anchor="middle">15us</text>
<text transform="translate(313.40,99.20) scale(0.9350,1)" font-size="8.4" fill="#214f9c" text-anchor="middle">20us</text>
<text transform="translate(346.50,99.20) scale(0.9350,1)" font-size="8.4" fill="#214f9c" text-anchor="middle">25us</text>
<text transform="translate(379.60,99.20) scale(0.9350,1)" font-size="8.4" fill="#214f9c" text-anchor="middle">30us</text>
<text transform="translate(412.70,99.20) scale(0.9350,1)" font-size="8.4" fill="#214f9c" text-anchor="middle">35us</text>
<text transform="translate(445.80,99.20) scale(0.9350,1)" font-size="8.4" fill="#214f9c" text-anchor="middle">40us</text>
<text transform="translate(478.90,99.20) scale(0.9350,1)" font-size="8.4" fill="#214f9c" text-anchor="middle">45us</text>
<text transform="translate(512.00,99.20) scale(0.9350,1)" font-size="8.4" fill="#214f9c" text-anchor="middle">50us</text>
<text transform="translate(545.10,99.20) scale(0.9350,1)" font-size="8.4" fill="#214f9c" text-anchor="middle">55us</text>
<text transform="translate(578.20,99.20) scale(0.9350,1)" font-size="8.4" fill="#214f9c" text-anchor="middle">60us</text>
<text transform="translate(181.00,319.80) scale(0.9100,1)" font-size="8.4" fill="#214f9c" text-anchor="middle">0</text>
<text transform="translate(214.10,319.80) scale(0.9100,1)" font-size="8.4" fill="#214f9c" text-anchor="middle">200</text>
<text transform="translate(247.20,319.80) scale(0.9100,1)" font-size="8.4" fill="#214f9c" text-anchor="middle">400</text>
<text transform="translate(280.30,319.80) scale(0.9100,1)" font-size="8.4" fill="#214f9c" text-anchor="middle">600</text>
<text transform="translate(313.40,319.80) scale(0.9100,1)" font-size="8.4" fill="#214f9c" text-anchor="middle">800</text>
<text transform="translate(346.50,319.80) scale(0.9100,1)" font-size="8.4" fill="#214f9c" text-anchor="middle">1000</text>
<text transform="translate(379.60,319.80) scale(0.9100,1)" font-size="8.4" fill="#214f9c" text-anchor="middle">1200</text>
<text transform="translate(412.70,319.80) scale(0.9100,1)" font-size="8.4" fill="#214f9c" text-anchor="middle">1400</text>
<text transform="translate(445.80,319.80) scale(0.9100,1)" font-size="8.4" fill="#214f9c" text-anchor="middle">1600</text>
<text transform="translate(478.90,319.80) scale(0.9100,1)" font-size="8.4" fill="#214f9c" text-anchor="middle">1800</text>
<text transform="translate(512.00,319.80) scale(0.9100,1)" font-size="8.4" fill="#214f9c" text-anchor="middle">2000</text>
<text transform="translate(545.10,319.80) scale(0.9100,1)" font-size="8.4" fill="#214f9c" text-anchor="middle">2200</text>
<text transform="translate(578.20,319.80) scale(0.9100,1)" font-size="8.4" fill="#214f9c" text-anchor="middle">2400</text>
<text transform="translate(177.50,120.20) scale(0.9350,1)" font-size="8.4" fill="#214f9c" text-anchor="end">1V</text>
<text transform="translate(604.60,120.20) scale(0.9100,1)" font-size="8.4" fill="#214f9c" text-anchor="start">1792</text>
<text transform="translate(177.50,145.70) scale(0.9700,1)" font-size="8.4" fill="#214f9c" text-anchor="end">800mV</text>
<text transform="translate(604.60,145.70) scale(0.9100,1)" font-size="8.4" fill="#214f9c" text-anchor="start">1280</text>
<text transform="translate(177.50,171.20) scale(0.9700,1)" font-size="8.4" fill="#214f9c" text-anchor="end">600mV</text>
<text transform="translate(604.60,171.20) scale(0.9100,1)" font-size="8.4" fill="#214f9c" text-anchor="start">768</text>
<text transform="translate(177.50,196.70) scale(0.9700,1)" font-size="8.4" fill="#214f9c" text-anchor="end">400mV</text>
<text transform="translate(604.60,196.70) scale(0.9100,1)" font-size="8.4" fill="#214f9c" text-anchor="start">256</text>
<text transform="translate(177.50,222.20) scale(0.9700,1)" font-size="8.4" fill="#214f9c" text-anchor="end">200mV</text>
<text transform="translate(604.60,222.20) scale(0.9100,1)" font-size="8.4" fill="#214f9c" text-anchor="start">-256</text>
<text transform="translate(177.50,247.70) scale(0.9350,1)" font-size="8.4" fill="#214f9c" text-anchor="end">-0pV</text>
<text transform="translate(604.60,247.70) scale(0.9100,1)" font-size="8.4" fill="#214f9c" text-anchor="start">-768</text>
<text transform="translate(177.50,273.20) scale(0.9700,1)" font-size="8.4" fill="#214f9c" text-anchor="end">-200mV</text>
<text transform="translate(604.60,273.20) scale(0.9100,1)" font-size="8.4" fill="#214f9c" text-anchor="start">-1280</text>
<text transform="translate(177.50,298.70) scale(0.9700,1)" font-size="8.4" fill="#214f9c" text-anchor="end">-400mV</text>
<text transform="translate(604.60,298.70) scale(0.9100,1)" font-size="8.4" fill="#214f9c" text-anchor="start">-1792</text>
<text transform="translate(391.30,86.50) scale(0.9262,1)" font-size="8.4" fill="#214f9c" text-anchor="middle">Time</text>
<text transform="translate(391.40,332.40) scale(0.9547,1)" font-size="8.4" fill="#214f9c" text-anchor="middle">Samples</text>
<text transform="translate(143.40,206.80) rotate(-90) scale(0.9531,1)" font-size="8.4" fill="#214f9c" text-anchor="middle">Amplitude</text>
<text transform="translate(629.40,207.50) rotate(90) scale(0.9524,1)" font-size="8.4" fill="#214f9c" text-anchor="middle">Signed Value</text>
</g>
<rect x="0.00" y="338.60" width="645.00" height="13.00" fill="#d4d0c8"/>
<g id="tabs">
<rect x="1.30" y="338.60" width="1.60" height="12.60" fill="#808080"/>
<rect x="2.90" y="338.60" width="1.50" height="11.60" fill="#404040"/>
<line x1="3.00" y1="350.50" x2="146.00" y2="350.50" stroke="#000" stroke-width="0.9"/>
<path d="M53 339 L57 350 H144 L148.5 339" fill="#d4d0c8" stroke="#000" stroke-width="0.8"/>
<text transform="translate(63.60,347.80) scale(0.9284,1)" font-size="8.6" fill="#000" text-anchor="start">Frequency Spectrum</text>
<path d="M3.5 339 L7 350.6 H51 L55 339 Z" fill="#fff"/>
<path d="M3.5 339 L7 350.6 H51 L55 339" fill="none" stroke="#000" stroke-width="0.8"/>
<text transform="translate(9.00,347.80) scale(0.9732,1)" font-size="8.6" fill="#000" text-anchor="start" font-weight="bold">Segments</text>
</g>
<g id="mdi">
<rect x="0.00" y="351.40" width="645.00" height="3.20" fill="#d4d0c8"/>
<rect x="0.00" y="354.90" width="645.00" height="15.20" fill="#f3f2ef"/>
<rect x="0.00" y="370.10" width="645.00" height="99.00" fill="#e6e6e4"/>
<line x1="0.00" y1="354.50" x2="645.00" y2="354.50" stroke="#76746e" stroke-width="1"/>
<path d="M4.2 357.2 H13 V362.6 L10.6 366.8 H4.2 Z" fill="#55554a"/>
<path d="M5.4 364.6 L6.4 359.6 L7.8 363.4 L9 359 L10 362.4 L11.8 358.4" stroke="#f4ec20" stroke-width="1.3" fill="none"/>
<text transform="translate(17.00,365.00) scale(0.9245,1)" font-size="8.7" fill="#000" text-anchor="start">Even VS...</text>
<line x1="58.50" y1="357.00" x2="58.50" y2="366.50" stroke="#a0a09a" stroke-width="0.8"/>
</g>
<g id="preview">
<rect x="2.50" y="376.00" width="640.00" height="12.00" fill="url(#gTitle)"/>
<text transform="translate(4.40,385.50) scale(1.0166,1)" font-size="8.8" fill="#fff" text-anchor="start" font-weight="bold">Preview : Even VSync.WaveEasy</text>
<rect x="624.00" y="377.20" width="8.40" height="9.60" fill="#d4d0c8"/>
<line x1="624.00" y1="377.60" x2="632.40" y2="377.60" stroke="#fff" stroke-width="0.8"/>
<line x1="624.40" y1="377.20" x2="624.40" y2="386.80" stroke="#fff" stroke-width="0.8"/>
<line x1="624.00" y1="386.40" x2="632.40" y2="386.40" stroke="#404040" stroke-width="0.8"/>
<line x1="632.00" y1="377.20" x2="632.00" y2="386.80" stroke="#404040" stroke-width="0.8"/>
<rect x="633.80" y="377.20" width="8.20" height="9.60" fill="#d4d0c8"/>
<line x1="633.80" y1="377.60" x2="642.00" y2="377.60" stroke="#fff" stroke-width="0.8"/>
<line x1="634.20" y1="377.20" x2="634.20" y2="386.80" stroke="#fff" stroke-width="0.8"/>
<line x1="633.80" y1="386.40" x2="642.00" y2="386.40" stroke="#404040" stroke-width="0.8"/>
<line x1="641.60" y1="377.20" x2="641.60" y2="386.80" stroke="#404040" stroke-width="0.8"/>
<path d="M625 382 L628.2 378.7 L631.4 382 L628.2 385.3 Z" fill="none" stroke="#000" stroke-width="1"/>
<path d="M635.8 379.6 L640 384.4 M640 379.6 L635.8 384.4" stroke="#000" stroke-width="0.9" fill="none"/>
<rect x="2.50" y="389.00" width="641.80" height="79.30" fill="#606060"/>
<rect x="3.80" y="390.20" width="639.00" height="76.70" fill="#fff"/>
<rect x="3.80" y="390.20" width="637.90" height="75.60" fill="#a9d3a9"/>
<rect x="32.00" y="405.40" width="574.00" height="44.60" fill="#000"/>
<line x1="83.40" y1="405.40" x2="83.40" y2="450.00" stroke="#a6a6a6" stroke-width="0.8"/>
<line x1="134.80" y1="405.40" x2="134.80" y2="450.00" stroke="#a6a6a6" stroke-width="0.8"/>
<line x1="186.20" y1="405.40" x2="186.20" y2="450.00" stroke="#a6a6a6" stroke-width="0.8"/>
<line x1="237.60" y1="405.40" x2="237.60" y2="450.00" stroke="#a6a6a6" stroke-width="0.8"/>
<line x1="289.00" y1="405.40" x2="289.00" y2="450.00" stroke="#a6a6a6" stroke-width="0.8"/>
<line x1="340.40" y1="405.40" x2="340.40" y2="450.00" stroke="#a6a6a6" stroke-width="0.8"/>
<line x1="391.80" y1="405.40" x2="391.80" y2="450.00" stroke="#a6a6a6" stroke-width="0.8"/>
<line x1="443.20" y1="405.40" x2="443.20" y2="450.00" stroke="#a6a6a6" stroke-width="0.8"/>
<line x1="494.60" y1="405.40" x2="494.60" y2="450.00" stroke="#a6a6a6" stroke-width="0.8"/>
<line x1="546.00" y1="405.40" x2="546.00" y2="450.00" stroke="#a6a6a6" stroke-width="0.8"/>
<line x1="597.40" y1="405.40" x2="597.40" y2="450.00" stroke="#a6a6a6" stroke-width="0.8"/>
<line x1="32.00" y1="408.00" x2="606.00" y2="408.00" stroke="#a6a6a6" stroke-width="0.8"/>
<line x1="32.00" y1="436.00" x2="606.00" y2="436.00" stroke="#a6a6a6" stroke-width="0.8"/>
<text transform="translate(31.20,399.80) scale(0.9350,1)" font-size="8.4" fill="#214f9c" text-anchor="middle">0s</text>
<text transform="translate(32.00,461.00) scale(0.9100,1)" font-size="8.4" fill="#214f9c" text-anchor="middle">0</text>
<text transform="translate(82.60,399.80) scale(0.9350,1)" font-size="8.4" fill="#214f9c" text-anchor="middle">125us</text>
<text transform="translate(83.40,461.00) scale(0.9100,1)" font-size="8.4" fill="#214f9c" text-anchor="middle">5000</text>
<text transform="translate(134.00,399.80) scale(0.9350,1)" font-size="8.4" fill="#214f9c" text-anchor="middle">250us</text>
<text transform="translate(134.80,461.00) scale(0.9100,1)" font-size="8.4" fill="#214f9c" text-anchor="middle">10000</text>
<text transform="translate(185.40,399.80) scale(0.9350,1)" font-size="8.4" fill="#214f9c" text-anchor="middle">375us</text>
<text transform="translate(186.20,461.00) scale(0.9100,1)" font-size="8.4" fill="#214f9c" text-anchor="middle">15000</text>
<text transform="translate(236.80,399.80) scale(0.9350,1)" font-size="8.4" fill="#214f9c" text-anchor="middle">500us</text>
<text transform="translate(237.60,461.00) scale(0.9100,1)" font-size="8.4" fill="#214f9c" text-anchor="middle">20000</text>
<text transform="translate(288.20,399.80) scale(0.9350,1)" font-size="8.4" fill="#214f9c" text-anchor="middle">625us</text>
<text transform="translate(289.00,461.00) scale(0.9100,1)" font-size="8.4" fill="#214f9c" text-anchor="middle">25000</text>
<text transform="translate(339.60,399.80) scale(0.9350,1)" font-size="8.4" fill="#214f9c" text-anchor="middle">750us</text>
<text transform="translate(340.40,461.00) scale(0.9100,1)" font-size="8.4" fill="#214f9c" text-anchor="middle">30000</text>
<text transform="translate(391.00,399.80) scale(0.9350,1)" font-size="8.4" fill="#214f9c" text-anchor="middle">875us</text>
<text transform="translate(391.80,461.00) scale(0.9100,1)" font-size="8.4" fill="#214f9c" text-anchor="middle">35000</text>
<text transform="translate(442.40,399.80) scale(0.9350,1)" font-size="8.4" fill="#214f9c" text-anchor="middle">1ms</text>
<text transform="translate(443.20,461.00) scale(0.9100,1)" font-size="8.4" fill="#214f9c" text-anchor="middle">40000</text>
<text transform="translate(493.80,399.80) scale(0.9350,1)" font-size="8.4" fill="#214f9c" text-anchor="middle">1.1ms</text>
<text transform="translate(494.60,461.00) scale(0.9100,1)" font-size="8.4" fill="#214f9c" text-anchor="middle">45000</text>
<text transform="translate(545.20,399.80) scale(0.9350,1)" font-size="8.4" fill="#214f9c" text-anchor="middle">1.3ms</text>
<text transform="translate(546.00,461.00) scale(0.9100,1)" font-size="8.4" fill="#214f9c" text-anchor="middle">50000</text>
<text transform="translate(596.60,399.80) scale(0.9350,1)" font-size="8.4" fill="#214f9c" text-anchor="middle">1.4ms</text>
<text transform="translate(597.40,461.00) scale(0.9100,1)" font-size="8.4" fill="#214f9c" text-anchor="middle">55000</text>
<text transform="translate(28.00,410.80) scale(0.9300,1)" font-size="8.4" fill="#214f9c" text-anchor="end">1V</text>
<text transform="translate(27.80,438.90) scale(0.9300,1)" font-size="8.4" fill="#214f9c" text-anchor="end">0V</text>
<text transform="translate(609.80,410.80) scale(0.9100,1)" font-size="8.4" fill="#214f9c" text-anchor="start">1792</text>
<text transform="translate(609.80,438.90) scale(0.9100,1)" font-size="8.4" fill="#214f9c" text-anchor="start">-768</text>
<text transform="translate(12.60,427.80) rotate(-90) scale(0.9611,1)" font-size="8.4" fill="#214f9c" text-anchor="middle">Amplitude</text>
<text transform="translate(632.40,428.20) rotate(90) scale(0.9585,1)" font-size="8.4" fill="#214f9c" text-anchor="middle">Signed Value</text>
<path d="M32.4 436.0 V446.4 H34.40 V436.0 H36.80 L38.00 432.6 H43.60 L44.80 436.0 H44.90 V446.4 H45.90 V436.0 H57.96 V446.4 H58.96 V436.0 H71.02 V446.4 H72.02 V436.0 H84.08 V446.4 H85.08 V436.0 H97.14 V446.4 H98.14 V436.0 H110.20 V446.4 H111.20 V436.0 H123.40 V446.4 H134.20 V436.0 H136.25 V446.4 H147.05 V436.0 H149.10 V446.4 H159.90 V436.0 H161.95 V446.4 H172.75 V436.0 H174.80 V446.4 H185.60 V436.0 H187.65 V446.4 H198.45 V436.0 H202.00 V446.4 H203.00 V436.0 H215.10 V446.4 H216.10 V436.0 H228.20 V446.4 H229.20 V436.0 H241.30 V446.4 H242.30 V436.0 H254.40 V446.4 H255.40 V436.0 H267.50 V446.4 H268.50 V436.0 H269.90 L271.10 432.6 H292.20 L293.40 436.0 H293.50 V446.4 H295.50 V436.0 H296.50 L297.70 432.6 H318.30 L319.50 436.0 H319.60 V446.4 H321.60 V436.0 H322.60 L323.80 432.6 H344.40 L345.60 436.0 H345.70 V446.4 H347.70 V436.0 H348.70 L349.90 432.6 H370.50 L371.70 436.0 H371.80 V446.4 H373.80 V436.0 H374.80 L376.00 432.6 H396.60 L397.80 436.0 H397.90 V446.4 H399.90 V436.0 H400.90 L402.10 432.6 H422.70 L423.90 436.0 H424.00 V446.4 H426.00 V436.0 H427.00 L428.20 432.6 H448.80 L450.00 436.0 H450.10 V446.4 H452.10 V436.0 H453.10 L454.30 432.6 H474.90 L476.10 436.0 H476.20 V446.4 H478.20 V436.0 H479.20 L480.40 432.6 H501.00 L502.20 436.0 H502.30 V446.4 H504.30 V436.0 H505.30 L506.50 432.6 H527.10 L528.30 436.0 H528.40 V446.4 H530.40 V436.0 H531.40 L532.60 432.6 H553.20 L554.40 436.0 H554.50 V446.4 H556.50 V436.0 H557.50 L558.70 432.6 H579.30 L580.50 436.0 H580.60 V446.4 H582.60 V436.0 H583.60 L584.80 432.6 H605.40" fill="none" stroke="#ffff00" stroke-width="1.25" stroke-linejoin="miter"/>
<path d="M186 404.3 H200.4 M203.2 404.3 H216.4 M186 450.4 H200.4 M203.2 450.4 H216.4 M187.2 403.2 V425.6 M187.2 428.2 V451.5 M215.3 403.2 V425.6 M215.3 428.2 V451.5" stroke="#000" stroke-width="2.4" fill="none"/>
<path d="M186.4 404.3 H200.2 M203.6 404.3 H216 M186.4 450.4 H200.2 M203.6 450.4 H216" stroke="#fff" stroke-width="1.9" stroke-dasharray="1.1 0.8" fill="none"/>
<path d="M187.2 404 V425.4 M187.2 428.4 V451 M215.3 404 V425.4 M215.3 428.4 V451" stroke="#fff" stroke-width="1.8" stroke-dasharray="1.1 0.8" fill="none"/>
</g>
<g id="status">
<rect x="0.00" y="468.40" width="645.00" height="2.30" fill="#ecebe8"/>
<rect x="0.00" y="470.70" width="645.00" height="13.00" fill="#f2f1ee"/>
<rect x="0.00" y="470.70" width="217.70" height="12.80" fill="#d4d0c8"/>
<line x1="0.00" y1="471.10" x2="217.70" y2="471.10" stroke="#808080" stroke-width="0.8"/>
<line x1="0.40" y1="470.70" x2="0.40" y2="483.50" stroke="#808080" stroke-width="0.8"/>
<line x1="217.40" y1="471.50" x2="217.40" y2="483.50" stroke="#fff" stroke-width="0.6"/>
<rect x="219.30" y="470.70" width="62.40" height="12.80" fill="#d4d0c8"/>
<line x1="219.30" y1="471.10" x2="281.70" y2="471.10" stroke="#808080" stroke-width="0.8"/>
<line x1="219.70" y1="470.70" x2="219.70" y2="483.50" stroke="#808080" stroke-width="0.8"/>
<line x1="281.40" y1="471.50" x2="281.40" y2="483.50" stroke="#fff" stroke-width="0.6"/>
<rect x="283.40" y="470.70" width="160.40" height="12.80" fill="#d4d0c8"/>
<line x1="283.40" y1="471.10" x2="443.80" y2="471.10" stroke="#808080" stroke-width="0.8"/>
<line x1="283.80" y1="470.70" x2="283.80" y2="483.50" stroke="#808080" stroke-width="0.8"/>
<line x1="443.50" y1="471.50" x2="443.50" y2="483.50" stroke="#fff" stroke-width="0.6"/>
<rect x="446.20" y="470.70" width="135.00" height="12.80" fill="#d4d0c8"/>
<line x1="446.20" y1="471.10" x2="581.20" y2="471.10" stroke="#808080" stroke-width="0.8"/>
<line x1="446.60" y1="470.70" x2="446.60" y2="483.50" stroke="#808080" stroke-width="0.8"/>
<line x1="580.90" y1="471.50" x2="580.90" y2="483.50" stroke="#fff" stroke-width="0.6"/>
<rect x="583.40" y="470.70" width="18.80" height="12.80" fill="#d4d0c8"/>
<line x1="583.40" y1="471.10" x2="602.20" y2="471.10" stroke="#808080" stroke-width="0.8"/>
<line x1="583.80" y1="470.70" x2="583.80" y2="483.50" stroke="#808080" stroke-width="0.8"/>
<line x1="601.90" y1="471.50" x2="601.90" y2="483.50" stroke="#fff" stroke-width="0.6"/>
<rect x="604.00" y="470.70" width="20.60" height="12.80" fill="#d4d0c8"/>
<line x1="604.00" y1="471.10" x2="624.60" y2="471.10" stroke="#808080" stroke-width="0.8"/>
<line x1="604.40" y1="470.70" x2="604.40" y2="483.50" stroke="#808080" stroke-width="0.8"/>
<line x1="624.30" y1="471.50" x2="624.30" y2="483.50" stroke="#fff" stroke-width="0.6"/>
<rect x="626.40" y="470.70" width="19.60" height="12.80" fill="#d4d0c8"/>
<line x1="626.40" y1="471.10" x2="646.00" y2="471.10" stroke="#808080" stroke-width="0.8"/>
<line x1="626.80" y1="470.70" x2="626.80" y2="483.50" stroke="#808080" stroke-width="0.8"/>
<line x1="645.70" y1="471.50" x2="645.70" y2="483.50" stroke="#fff" stroke-width="0.6"/>
<text transform="translate(1.80,481.00) scale(0.9239,1)" font-size="8.8" fill="#000" text-anchor="start">Ready</text>
<text transform="translate(221.00,481.00) scale(0.9426,1)" font-size="8.8" fill="#c82020" text-anchor="start">Preview</text>
<text transform="translate(285.20,481.00) scale(0.9690,1)" font-size="8.8" fill="#2a8a8a" text-anchor="start">Cursor X = 0 Y = 0V</text>
<text transform="translate(448.50,481.00) scale(1.0311,1)" font-size="8.8" fill="#303080" text-anchor="start">X = 1637, Y = 400.9mV</text>
</g>
</svg>
</body></html>
